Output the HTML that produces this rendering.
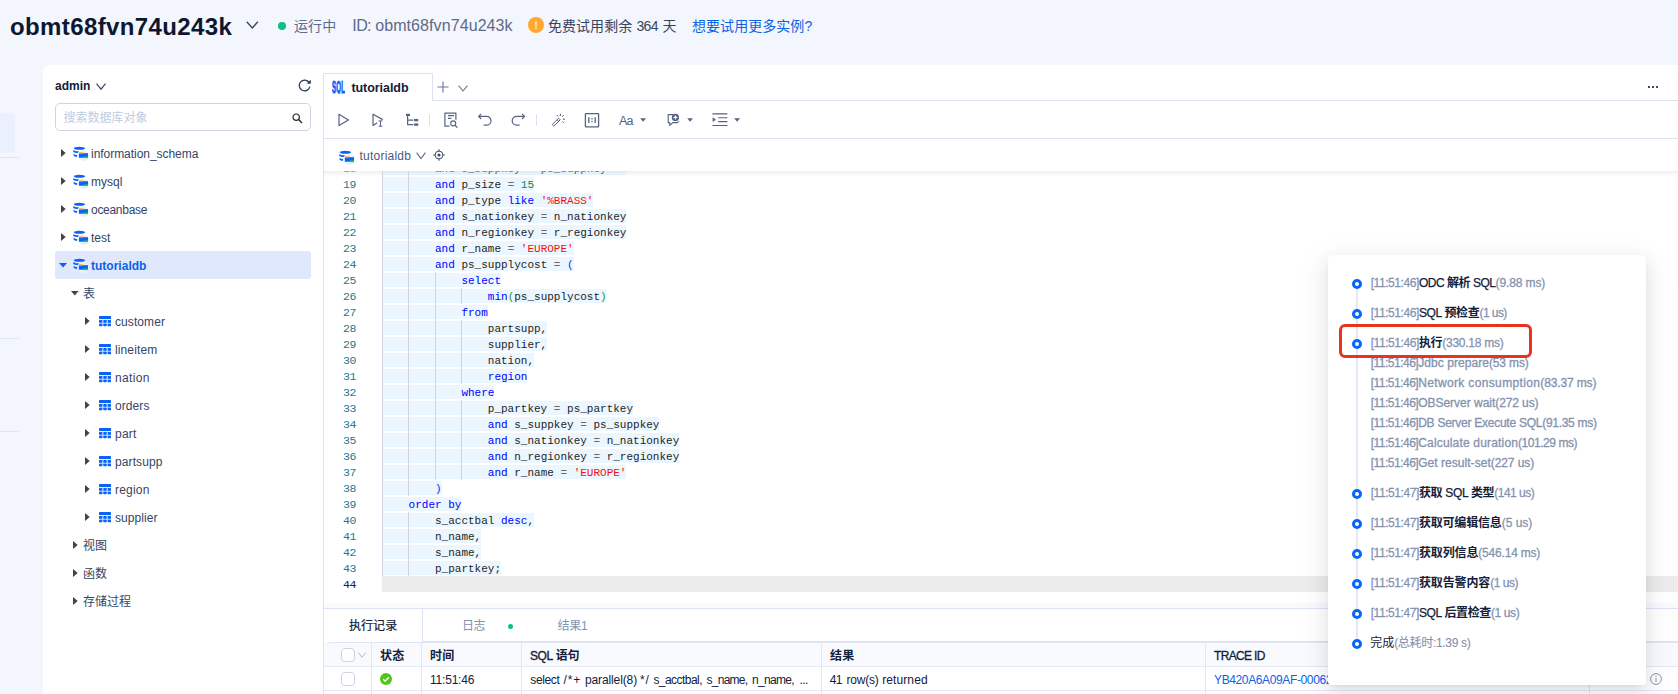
<!DOCTYPE html>
<html lang="zh-CN">
<head>
<meta charset="utf-8">
<title>obmt68fvn74u243k</title>
<style>
*{box-sizing:border-box;margin:0;padding:0}
html,body{width:1678px;height:694px;overflow:hidden}
body{background:#f3f6fc;font-family:"Liberation Sans","Noto Sans CJK SC",sans-serif;font-size:12px;color:#132039;position:relative}
.abs{position:absolute;white-space:nowrap}
svg{display:block;overflow:visible}
i{font-style:normal}
.title{font-size:24px;font-weight:700;line-height:32px;color:#0d1830}
.hd{font-size:14px;line-height:20px;color:#5c6b8a}
.railact{background:#eaf0fd;border-radius:0 5px 5px 0}
.panel{background:#fff;border-radius:8px 0 0 0}
.admin{font-weight:700;font-size:12px;line-height:18px;color:#132039}
.search{border:1px solid #cdd5e4;border-radius:5px;background:#fff}
.search span{position:absolute;left:7.4px;top:5.4px;line-height:18px;color:#c1cbe0;font-size:12px}
.tt{font-size:12px;line-height:18px;color:#364563}
.tab{border:1px solid #dbe2f1;border-bottom:none;background:#fff}
.sqlg{font-size:16.5px;font-weight:700;color:#0a66fb;line-height:20px;height:17.2px;overflow:hidden;transform:scaleX(.37);transform-origin:0 50%;letter-spacing:0.6px;-webkit-text-stroke:1px #0a66fb}
.tabt{font-size:12.5px;font-weight:700;line-height:18px;color:#132039}
.dbrow{background:#fff}
.edsh{position:absolute;left:0;top:0;width:100%;height:6px;box-shadow:#dcdcdc 0 6px 6px -6px inset}
#ed{left:324px;top:171px;width:1354px;height:421px;overflow:hidden;background:#fff}
.ln{position:absolute;left:0;width:32.2px;text-align:right;font-family:"Liberation Mono",monospace;font-size:11.5px;letter-spacing:-.3px;line-height:16px;height:16px;color:#237893;padding-top:1px}
.ln.cur{color:#0b216f}
.curline{position:absolute;left:58px;width:1300px;height:16px;background:#ececec}
.cl{position:absolute;left:58.2px;height:16px;font-family:"Liberation Mono",monospace;font-size:11px;line-height:16px;white-space:pre;color:#1e1e1e}
.cl .s{position:absolute;left:0;top:1px;height:14px;background:#ebf6fe}
.cl .x{position:relative;top:1px}
.k{color:#0000ff}.st{color:#f80c0c}.n{color:#098658}.o{color:#6b6b6b}.p{color:#0431fa}.q{color:#319331}
.g{position:absolute;top:0;width:1px;height:16px;background:#cdd4de;margin-left:-.2px}
.btab{font-size:12px;line-height:18px;color:#8592ad}
.th{background:#f9fafe;border-top:1px solid #dfe5f2;border-bottom:1px solid #e4e9f4;border-radius:6px 0 0 0}
.tht{line-height:18px;font-weight:700;font-size:12px;color:#132039}
.tdt{line-height:18px;font-size:12px;color:#132039}
.cb{border:1px solid #cdd5e4;border-radius:4px;background:#fff}
.pop{background:#fff;border-radius:5px 5px 2px 4px;box-shadow:0 3px 6px -4px rgba(10,25,70,.12),0 6px 16px 0 rgba(10,25,70,.08),0 9px 28px 8px rgba(10,25,70,.05)}
.dot{border:3px solid #0765fa;border-radius:50%;background:#fff}
.sg{display:inline-block;white-space:nowrap;vertical-align:top}
.it{font-size:12px;line-height:18px;color:#8592ad;-webkit-text-stroke:.26px}
.it .cj{font-weight:700;-webkit-text-stroke:0}
.sub{font-size:12px;line-height:18px;color:#8592ad;font-weight:400;-webkit-text-stroke:.3px}
.red{border:3px solid #e6341e;border-radius:6px}

</style>
</head>
<body>
<div id="t1" class="abs title" style="left:10px;top:11px;letter-spacing:0.380px;">obmt68fvn74u243k</div>
<svg class="abs" style="left:246px;top:21px" width="13" height="9" viewBox="0 0 13 9"><path d="M0.8 0.8 L6.3 7 L11.8 0.8" fill="none" stroke="#3b4863" stroke-width="1.4"/></svg>
<div class="abs " style="left:278px;top:22px;width:8px;height:8px;background:#0ac185;border-radius:50%"></div>
<div id="t2" class="abs hd" style="left:294px;top:16px;letter-spacing:0.100px;">运行中</div>
<div id="t3" class="abs hd" style="left:352.3px;top:16px;letter-spacing:-0.600px;font-size:16px">ID:</div>
<div id="t4" class="abs hd" style="left:375.2px;top:16px;letter-spacing:0.086px;font-size:16px">obmt68fvn74u243k</div>
<svg class="abs" style="left:528px;top:16.8px" width="16" height="16" viewBox="0 0 16 16"><circle cx="8" cy="8" r="8" fill="#ffa82d"/><rect x="7.1" y="4.2" width="1.8" height="5.6" rx=".4" fill="#fde3b6"/><rect x="7.1" y="10.6" width="1.8" height="1.6" rx=".4" fill="#fde3b6"/></svg>
<div id="t5" class="abs hd" style="left:548px;top:16px;letter-spacing:0.040px;color:#364563">免费试用剩余</div>
<div id="t6" class="abs hd" style="left:636.4px;top:16px;letter-spacing:-0.600px;color:#364563">364</div>
<div id="t7" class="abs hd" style="left:662.4px;top:16px;color:#364563">天</div>
<div id="t8" class="abs hd" style="left:692px;top:16px;letter-spacing:0.050px;color:#0b63e8">想要试用更多实例?</div>
<div class="abs railact" style="left:0px;top:113px;width:15px;height:40px;"></div>
<div class="abs " style="left:0px;top:157px;width:19px;height:1px;background:#dfe5f1"></div>
<div class="abs " style="left:0px;top:338px;width:19px;height:1px;background:#dfe5f1"></div>
<div class="abs " style="left:0px;top:431px;width:19px;height:1px;background:#dfe5f1"></div>
<div class="abs panel" style="left:43px;top:65px;width:1640px;height:640px;"></div>
<div class="abs " style="left:323px;top:73px;width:1px;height:630px;background:#dbe2f1"></div>
<div id="t9" class="abs admin" style="left:55px;top:77px;letter-spacing:0.014px;">admin</div>
<svg class="abs" style="left:96px;top:83px" width="10" height="7" viewBox="0 0 10 7"><path d="M0.5 0.6 L5 6.2 L9.5 0.6" fill="none" stroke="#3b4863" stroke-width="1.2"/></svg>
<svg class="abs" style="left:298px;top:79px" width="13" height="13" viewBox="0 0 13 13"><path d="M11.2 3.6 A5.4 5.4 0 1 0 11.9 7.6" fill="none" stroke="#2a3754" stroke-width="1.25"/><path d="M12.4 1.4 V4.3 H9.5 Z" fill="#2a3754" stroke="#2a3754" stroke-width=".8"/></svg>
<div class="abs search" style="left:55px;top:103px;width:256px;height:28px;"><span>搜索数据库对象</span></div>
<svg class="abs" style="left:291.8px;top:113px" width="11" height="11" viewBox="0 0 11 11"><circle cx="4.2" cy="4.2" r="3.2" fill="none" stroke="#22262e" stroke-width="1.2"/><path d="M6.6 6.6 L10 10" stroke="#22262e" stroke-width="1.4"/></svg>
<svg class="abs" style="left:60.8px;top:149.05px" width="5" height="8" viewBox="0 0 5 8"><path d="M0 0 L4.7 3.95 L0 7.9 Z" fill="#404349"/></svg>
<svg class="abs" style="left:73px;top:146px" width="16" height="16" viewBox="0 0 16 16"><circle cx="10.6" cy="9.8" r="5.3" fill="#e9effd"/><ellipse cx="6.4" cy="2.3" rx="5.7" ry="1.55" fill="#0a62f7"/><path d="M0.3 4.1 C1.6 5.2 4.2 5.5 6 5.2 L4.8 7 C3 7 1.4 6.6 0.3 6 Z" fill="#0a62f7"/><path d="M0.6 7.8 C1.4 8.6 2.8 9 4.2 9 L4 11 C2.6 11 1.4 10.5 0.6 9.8 Z" fill="#0a62f7"/><rect x="5.9" y="7.2" width="9.1" height="4.5" fill="#0a62f7"/><rect x="5.9" y="6.4" width="4.2" height="1.4" fill="#ff9a14"/><rect x="10.9" y="10.4" width="4.1" height="1.7" fill="#1fc45a"/></svg>
<div id="t10" class="abs tt" style="left:91px;top:145px;letter-spacing:-0.039px;">information_schema</div>
<svg class="abs" style="left:60.8px;top:177.05px" width="5" height="8" viewBox="0 0 5 8"><path d="M0 0 L4.7 3.95 L0 7.9 Z" fill="#404349"/></svg>
<svg class="abs" style="left:73px;top:174px" width="16" height="16" viewBox="0 0 16 16"><circle cx="10.6" cy="9.8" r="5.3" fill="#e9effd"/><ellipse cx="6.4" cy="2.3" rx="5.7" ry="1.55" fill="#0a62f7"/><path d="M0.3 4.1 C1.6 5.2 4.2 5.5 6 5.2 L4.8 7 C3 7 1.4 6.6 0.3 6 Z" fill="#0a62f7"/><path d="M0.6 7.8 C1.4 8.6 2.8 9 4.2 9 L4 11 C2.6 11 1.4 10.5 0.6 9.8 Z" fill="#0a62f7"/><rect x="5.9" y="7.2" width="9.1" height="4.5" fill="#0a62f7"/><rect x="5.9" y="6.4" width="4.2" height="1.4" fill="#ff9a14"/><rect x="10.9" y="10.4" width="4.1" height="1.7" fill="#1fc45a"/></svg>
<div id="t11" class="abs tt" style="left:91px;top:173px;letter-spacing:0.014px;">mysql</div>
<svg class="abs" style="left:60.8px;top:205.05px" width="5" height="8" viewBox="0 0 5 8"><path d="M0 0 L4.7 3.95 L0 7.9 Z" fill="#404349"/></svg>
<svg class="abs" style="left:73px;top:202px" width="16" height="16" viewBox="0 0 16 16"><circle cx="10.6" cy="9.8" r="5.3" fill="#e9effd"/><ellipse cx="6.4" cy="2.3" rx="5.7" ry="1.55" fill="#0a62f7"/><path d="M0.3 4.1 C1.6 5.2 4.2 5.5 6 5.2 L4.8 7 C3 7 1.4 6.6 0.3 6 Z" fill="#0a62f7"/><path d="M0.6 7.8 C1.4 8.6 2.8 9 4.2 9 L4 11 C2.6 11 1.4 10.5 0.6 9.8 Z" fill="#0a62f7"/><rect x="5.9" y="7.2" width="9.1" height="4.5" fill="#0a62f7"/><rect x="5.9" y="6.4" width="4.2" height="1.4" fill="#ff9a14"/><rect x="10.9" y="10.4" width="4.1" height="1.7" fill="#1fc45a"/></svg>
<div id="t12" class="abs tt" style="left:91px;top:201px;letter-spacing:-0.290px;">oceanbase</div>
<svg class="abs" style="left:60.8px;top:233.05px" width="5" height="8" viewBox="0 0 5 8"><path d="M0 0 L4.7 3.95 L0 7.9 Z" fill="#404349"/></svg>
<svg class="abs" style="left:73px;top:230px" width="16" height="16" viewBox="0 0 16 16"><circle cx="10.6" cy="9.8" r="5.3" fill="#e9effd"/><ellipse cx="6.4" cy="2.3" rx="5.7" ry="1.55" fill="#0a62f7"/><path d="M0.3 4.1 C1.6 5.2 4.2 5.5 6 5.2 L4.8 7 C3 7 1.4 6.6 0.3 6 Z" fill="#0a62f7"/><path d="M0.6 7.8 C1.4 8.6 2.8 9 4.2 9 L4 11 C2.6 11 1.4 10.5 0.6 9.8 Z" fill="#0a62f7"/><rect x="5.9" y="7.2" width="9.1" height="4.5" fill="#0a62f7"/><rect x="5.9" y="6.4" width="4.2" height="1.4" fill="#ff9a14"/><rect x="10.9" y="10.4" width="4.1" height="1.7" fill="#1fc45a"/></svg>
<div id="t13" class="abs tt" style="left:91px;top:229px;letter-spacing:0.019px;">test</div>
<div class="abs " style="left:55px;top:251px;width:256px;height:28px;background:#dfe8fd;border-radius:3px"></div>
<svg class="abs" style="left:58.9px;top:262.59999999999997px" width="9" height="5" viewBox="0 0 9 5"><path d="M0 0 H8.1 L4.05 4.6 Z" fill="#0b63e8"/></svg>
<svg class="abs" style="left:73px;top:258px" width="16" height="16" viewBox="0 0 16 16"><circle cx="10.6" cy="9.8" r="5.3" fill="#e9effd"/><ellipse cx="6.4" cy="2.3" rx="5.7" ry="1.55" fill="#0a62f7"/><path d="M0.3 4.1 C1.6 5.2 4.2 5.5 6 5.2 L4.8 7 C3 7 1.4 6.6 0.3 6 Z" fill="#0a62f7"/><path d="M0.6 7.8 C1.4 8.6 2.8 9 4.2 9 L4 11 C2.6 11 1.4 10.5 0.6 9.8 Z" fill="#0a62f7"/><rect x="5.9" y="7.2" width="9.1" height="4.5" fill="#0a62f7"/><rect x="5.9" y="6.4" width="4.2" height="1.4" fill="#ff9a14"/><rect x="10.9" y="10.4" width="4.1" height="1.7" fill="#1fc45a"/></svg>
<div id="t14" class="abs tt" style="left:91px;top:257px;letter-spacing:0.008px;color:#0b63e8;font-weight:700">tutorialdb</div>
<svg class="abs" style="left:71.2px;top:290.7px" width="9" height="5" viewBox="0 0 9 5"><path d="M0 0 H7.6 L3.8 4.6 Z" fill="#404349"/></svg>
<div id="t15" class="abs tt" style="left:83px;top:285px;">表</div>
<svg class="abs" style="left:84.8px;top:317.05px" width="5" height="8" viewBox="0 0 5 8"><path d="M0 0 L4.7 3.95 L0 7.9 Z" fill="#404349"/></svg>
<svg class="abs" style="left:99px;top:316px" width="12" height="11" viewBox="0 0 12 11"><rect x="0.4" y="3.6" width="11.2" height="6.4" fill="#c3d6fc"/><rect x="0" y="0" width="12" height="2.9" rx="0.5" fill="#0a62f7"/><g fill="#0a62f7"><rect x="0" y="4" width="3.2" height="2.8" rx=".5"/><rect x="4.4" y="4" width="3.2" height="2.8" rx=".5"/><rect x="8.8" y="4" width="3.2" height="2.8" rx=".5"/><rect x="0" y="7.7" width="3.2" height="2.5" rx=".5"/><rect x="4.4" y="7.7" width="3.2" height="2.5" rx=".5"/><rect x="8.8" y="7.7" width="3.2" height="2.5" rx=".5"/></g></svg>
<div id="t16" class="abs tt" style="left:115px;top:313px;letter-spacing:0.077px;">customer</div>
<svg class="abs" style="left:84.8px;top:345.05px" width="5" height="8" viewBox="0 0 5 8"><path d="M0 0 L4.7 3.95 L0 7.9 Z" fill="#404349"/></svg>
<svg class="abs" style="left:99px;top:344px" width="12" height="11" viewBox="0 0 12 11"><rect x="0.4" y="3.6" width="11.2" height="6.4" fill="#c3d6fc"/><rect x="0" y="0" width="12" height="2.9" rx="0.5" fill="#0a62f7"/><g fill="#0a62f7"><rect x="0" y="4" width="3.2" height="2.8" rx=".5"/><rect x="4.4" y="4" width="3.2" height="2.8" rx=".5"/><rect x="8.8" y="4" width="3.2" height="2.8" rx=".5"/><rect x="0" y="7.7" width="3.2" height="2.5" rx=".5"/><rect x="4.4" y="7.7" width="3.2" height="2.5" rx=".5"/><rect x="8.8" y="7.7" width="3.2" height="2.5" rx=".5"/></g></svg>
<div id="t17" class="abs tt" style="left:115px;top:341px;letter-spacing:0.120px;">lineitem</div>
<svg class="abs" style="left:84.8px;top:373.05px" width="5" height="8" viewBox="0 0 5 8"><path d="M0 0 L4.7 3.95 L0 7.9 Z" fill="#404349"/></svg>
<svg class="abs" style="left:99px;top:372px" width="12" height="11" viewBox="0 0 12 11"><rect x="0.4" y="3.6" width="11.2" height="6.4" fill="#c3d6fc"/><rect x="0" y="0" width="12" height="2.9" rx="0.5" fill="#0a62f7"/><g fill="#0a62f7"><rect x="0" y="4" width="3.2" height="2.8" rx=".5"/><rect x="4.4" y="4" width="3.2" height="2.8" rx=".5"/><rect x="8.8" y="4" width="3.2" height="2.8" rx=".5"/><rect x="0" y="7.7" width="3.2" height="2.5" rx=".5"/><rect x="4.4" y="7.7" width="3.2" height="2.5" rx=".5"/><rect x="8.8" y="7.7" width="3.2" height="2.5" rx=".5"/></g></svg>
<div id="t18" class="abs tt" style="left:115px;top:369px;letter-spacing:0.339px;">nation</div>
<svg class="abs" style="left:84.8px;top:401.05px" width="5" height="8" viewBox="0 0 5 8"><path d="M0 0 L4.7 3.95 L0 7.9 Z" fill="#404349"/></svg>
<svg class="abs" style="left:99px;top:400px" width="12" height="11" viewBox="0 0 12 11"><rect x="0.4" y="3.6" width="11.2" height="6.4" fill="#c3d6fc"/><rect x="0" y="0" width="12" height="2.9" rx="0.5" fill="#0a62f7"/><g fill="#0a62f7"><rect x="0" y="4" width="3.2" height="2.8" rx=".5"/><rect x="4.4" y="4" width="3.2" height="2.8" rx=".5"/><rect x="8.8" y="4" width="3.2" height="2.8" rx=".5"/><rect x="0" y="7.7" width="3.2" height="2.5" rx=".5"/><rect x="4.4" y="7.7" width="3.2" height="2.5" rx=".5"/><rect x="8.8" y="7.7" width="3.2" height="2.5" rx=".5"/></g></svg>
<div id="t19" class="abs tt" style="left:115px;top:397px;letter-spacing:0.077px;">orders</div>
<svg class="abs" style="left:84.8px;top:429.05px" width="5" height="8" viewBox="0 0 5 8"><path d="M0 0 L4.7 3.95 L0 7.9 Z" fill="#404349"/></svg>
<svg class="abs" style="left:99px;top:428px" width="12" height="11" viewBox="0 0 12 11"><rect x="0.4" y="3.6" width="11.2" height="6.4" fill="#c3d6fc"/><rect x="0" y="0" width="12" height="2.9" rx="0.5" fill="#0a62f7"/><g fill="#0a62f7"><rect x="0" y="4" width="3.2" height="2.8" rx=".5"/><rect x="4.4" y="4" width="3.2" height="2.8" rx=".5"/><rect x="8.8" y="4" width="3.2" height="2.8" rx=".5"/><rect x="0" y="7.7" width="3.2" height="2.5" rx=".5"/><rect x="4.4" y="7.7" width="3.2" height="2.5" rx=".5"/><rect x="8.8" y="7.7" width="3.2" height="2.5" rx=".5"/></g></svg>
<div id="t20" class="abs tt" style="left:115px;top:425px;letter-spacing:0.237px;">part</div>
<svg class="abs" style="left:84.8px;top:457.05px" width="5" height="8" viewBox="0 0 5 8"><path d="M0 0 L4.7 3.95 L0 7.9 Z" fill="#404349"/></svg>
<svg class="abs" style="left:99px;top:456px" width="12" height="11" viewBox="0 0 12 11"><rect x="0.4" y="3.6" width="11.2" height="6.4" fill="#c3d6fc"/><rect x="0" y="0" width="12" height="2.9" rx="0.5" fill="#0a62f7"/><g fill="#0a62f7"><rect x="0" y="4" width="3.2" height="2.8" rx=".5"/><rect x="4.4" y="4" width="3.2" height="2.8" rx=".5"/><rect x="8.8" y="4" width="3.2" height="2.8" rx=".5"/><rect x="0" y="7.7" width="3.2" height="2.5" rx=".5"/><rect x="4.4" y="7.7" width="3.2" height="2.5" rx=".5"/><rect x="8.8" y="7.7" width="3.2" height="2.5" rx=".5"/></g></svg>
<div id="t21" class="abs tt" style="left:115px;top:453px;letter-spacing:0.100px;">partsupp</div>
<svg class="abs" style="left:84.8px;top:485.05px" width="5" height="8" viewBox="0 0 5 8"><path d="M0 0 L4.7 3.95 L0 7.9 Z" fill="#404349"/></svg>
<svg class="abs" style="left:99px;top:484px" width="12" height="11" viewBox="0 0 12 11"><rect x="0.4" y="3.6" width="11.2" height="6.4" fill="#c3d6fc"/><rect x="0" y="0" width="12" height="2.9" rx="0.5" fill="#0a62f7"/><g fill="#0a62f7"><rect x="0" y="4" width="3.2" height="2.8" rx=".5"/><rect x="4.4" y="4" width="3.2" height="2.8" rx=".5"/><rect x="8.8" y="4" width="3.2" height="2.8" rx=".5"/><rect x="0" y="7.7" width="3.2" height="2.5" rx=".5"/><rect x="4.4" y="7.7" width="3.2" height="2.5" rx=".5"/><rect x="8.8" y="7.7" width="3.2" height="2.5" rx=".5"/></g></svg>
<div id="t22" class="abs tt" style="left:115px;top:481px;letter-spacing:0.208px;">region</div>
<svg class="abs" style="left:84.8px;top:513.05px" width="5" height="8" viewBox="0 0 5 8"><path d="M0 0 L4.7 3.95 L0 7.9 Z" fill="#404349"/></svg>
<svg class="abs" style="left:99px;top:512px" width="12" height="11" viewBox="0 0 12 11"><rect x="0.4" y="3.6" width="11.2" height="6.4" fill="#c3d6fc"/><rect x="0" y="0" width="12" height="2.9" rx="0.5" fill="#0a62f7"/><g fill="#0a62f7"><rect x="0" y="4" width="3.2" height="2.8" rx=".5"/><rect x="4.4" y="4" width="3.2" height="2.8" rx=".5"/><rect x="8.8" y="4" width="3.2" height="2.8" rx=".5"/><rect x="0" y="7.7" width="3.2" height="2.5" rx=".5"/><rect x="4.4" y="7.7" width="3.2" height="2.5" rx=".5"/><rect x="8.8" y="7.7" width="3.2" height="2.5" rx=".5"/></g></svg>
<div id="t23" class="abs tt" style="left:115px;top:509px;letter-spacing:0.053px;">supplier</div>
<svg class="abs" style="left:72.8px;top:541.05px" width="5" height="8" viewBox="0 0 5 8"><path d="M0 0 L4.7 3.95 L0 7.9 Z" fill="#404349"/></svg>
<div id="t24" class="abs tt" style="left:83px;top:537px;">视图</div>
<svg class="abs" style="left:72.8px;top:569.05px" width="5" height="8" viewBox="0 0 5 8"><path d="M0 0 L4.7 3.95 L0 7.9 Z" fill="#404349"/></svg>
<div id="t25" class="abs tt" style="left:83px;top:565px;">函数</div>
<svg class="abs" style="left:72.8px;top:597.05px" width="5" height="8" viewBox="0 0 5 8"><path d="M0 0 L4.7 3.95 L0 7.9 Z" fill="#404349"/></svg>
<div id="t26" class="abs tt" style="left:83px;top:593px;">存储过程</div>
<div class="abs tab" style="left:323px;top:73px;width:110px;height:28px;"></div>
<div class="abs " style="left:432px;top:100px;width:1250px;height:1px;background:#dbe2f1"></div>
<div id="t27" class="abs sqlg" style="left:331.7px;top:76.8px;">SQL</div>
<div id="t28" class="abs tabt" style="left:351.4px;top:79px;letter-spacing:-0.049px;">tutorialdb</div>
<svg class="abs" style="left:437px;top:81px" width="12" height="12" viewBox="0 0 12 12"><path d="M6 0.5 V11.5 M0.5 6 H11.5" stroke="#6a7690" stroke-width="1.1" fill="none"/></svg>
<svg class="abs" style="left:458px;top:85px" width="10" height="7" viewBox="0 0 10 7"><path d="M0.6 0.6 L5 6 L9.4 0.6" fill="none" stroke="#6a7690" stroke-width="1.1"/></svg>
<div class="abs " style="left:1648.4px;top:86px;width:1.7px;height:2px;background:#3f4c69"></div><div class="abs " style="left:1652.2px;top:86px;width:1.7px;height:2px;background:#3f4c69"></div><div class="abs " style="left:1656px;top:86px;width:1.7px;height:2px;background:#3f4c69"></div>
<div class="abs " style="left:324px;top:138px;width:1360px;height:1px;background:#dbe2f1"></div>
<svg class="abs" style="left:324px;top:101px" width="440" height="37" viewBox="324 101 440 37" fill="none" stroke="#56637f" stroke-width="1.2" stroke-linejoin="round">
<path d="M339 114.2 V125.6 L348.4 119.9 Z"/>
<path d="M382.8 119.6 L373 114.2 V125.4 L377.2 122.8"/>
<path d="M378.6 120.9 H382.4 M378.6 126.2 H382.4 M380.5 120.9 V126.2" stroke-width="1"/>
<g stroke="none" fill="#56637f"><rect x="406" y="113.8" width="4" height="2.2"/><rect x="414.2" y="118.9" width="4" height="2.4"/><rect x="414.2" y="123.4" width="4" height="2.4"/></g>
<path d="M407.6 116 V124.6 H413.4 M407.6 120.1 H413.4"/>
<path d="M429.5 114 V126" stroke="#d9dfec" stroke-width="1"/>
<path d="M449.4 126.2 H444.9 V113.2 H455.9 V119.8"/>
<path d="M448 115.6 H454 M448 118.4 H451.4" stroke-width="1.1"/>
<circle cx="453.2" cy="123.4" r="2.5" stroke-width="1.1"/>
<path d="M455.1 125.3 L457.4 127.6" stroke-width="1.3"/>
<path d="M481.2 113.8 L478.6 116.4 L481.2 119 M478.8 116.4 H486.6 A4.4 4.4 0 0 1 486.6 125.2 H483.6"/>
<path d="M522 113.8 L524.6 116.4 L522 119 M524.4 116.4 H516.6 A4.4 4.4 0 0 0 516.6 125.2 H519.6"/>
<path d="M536.5 114 V126" stroke="#d9dfec" stroke-width="1"/>
<path d="M552.2 124.6 L558.6 118.2 L560.2 119.8 L553.8 126.2 Z M557 119.8 L558.6 121.4" stroke-width="1"/>
<path d="M560.4 113.8 V116 M563.8 115 L562.4 116.6 M562.8 119.2 H565 M562.4 121.4 L563.8 122.8 M556.8 115 L558 116.4" stroke-width="1"/>
<rect x="585.4" y="113.6" width="13.2" height="13.2" rx="0.6" stroke-width="1.3"/>
<path d="M588.8 117.2 V123 M595.2 117.2 V123" stroke-width="1.3"/>
<path d="M592 118 V119.4 M592 120.8 V122.2" stroke-width="1.2"/>
<g stroke="none" fill="#56637f"><path d="M640.2 118.2 H646 L643.1 121.7 Z"/><path d="M687.2 118.2 H693 L690.1 121.7 Z"/><path d="M734.2 118.2 H740 L737.1 121.7 Z"/>
<path d="M712.6 117.3 L716 119.7 L712.6 122.1 Z"/></g>
<path d="M673 114.6 H668.2 V122.6 H669.8 V125.4 L672.8 122.6 H677.4 L679 121.4" stroke-width="1.1"/>
<circle cx="675.4" cy="117.4" r="3.6" fill="#56637f" stroke="none"/>
<path d="M675.4 115.4 V119.4 M673.4 117.4 H677.4" stroke="#fff" stroke-width="1.1"/>
<path d="M712.4 113.9 H727.4 M718.2 117.8 H727.4 M718.2 121.6 H727.4 M712.4 125.5 H727.4" stroke-width="1.1"/>
</svg>
<div class="abs" style="left:619px;top:111.5px;font-size:12.5px;line-height:18px;color:#56637f;letter-spacing:-0.8px">Aa</div>

<div class="abs dbrow" style="left:324px;top:139px;width:1360px;height:32px;"></div>
<svg class="abs" style="left:339px;top:150px" width="16" height="16" viewBox="0 0 16 16"><circle cx="10.6" cy="9.8" r="5.3" fill="#e9effd"/><ellipse cx="6.4" cy="2.3" rx="5.7" ry="1.55" fill="#0a62f7"/><path d="M0.3 4.1 C1.6 5.2 4.2 5.5 6 5.2 L4.8 7 C3 7 1.4 6.6 0.3 6 Z" fill="#0a62f7"/><path d="M0.6 7.8 C1.4 8.6 2.8 9 4.2 9 L4 11 C2.6 11 1.4 10.5 0.6 9.8 Z" fill="#0a62f7"/><rect x="5.9" y="7.2" width="9.1" height="4.5" fill="#0a62f7"/><rect x="5.9" y="6.4" width="4.2" height="1.4" fill="#ff9a14"/><rect x="10.9" y="10.4" width="4.1" height="1.7" fill="#1fc45a"/></svg>
<div id="t29" class="abs tt" style="left:359.5px;top:147px;letter-spacing:0.225px;color:#4b5a7c">tutorialdb</div>
<svg class="abs" style="left:416px;top:152px" width="10" height="8" viewBox="0 0 10 8"><path d="M0.6 0.6 L5 6.6 L9.4 0.6" fill="none" stroke="#5c6b8a" stroke-width="1.1"/></svg>
<svg class="abs" style="left:433px;top:149px" width="12" height="12" viewBox="0 0 12 12"><circle cx="6" cy="6" r="3.9" fill="none" stroke="#3b4863" stroke-width="1"/><circle cx="6" cy="6" r="1.6" fill="#3b4863"/><path d="M6 0.2 V2.2 M6 9.8 V11.8 M0.2 6 H2.2 M9.8 6 H11.8" stroke="#3b4863" stroke-width="1"/></svg>
<div class="abs" id="ed"><div class="ln" style="top:-11px">18</div><div class="cl" style="top:-11px"><i class="s" style="width:244.2px"></i><i class="g" style="left:0.0px"></i><i class="g" style="left:26.4px"></i><span class="x">        <span class="k">and</span> s_suppkey <span class="o">=</span> ps_suppkey</span></div><div class="ln" style="top:5px">19</div><div class="cl" style="top:5px"><i class="s" style="width:151.8px"></i><i class="g" style="left:0.0px"></i><i class="g" style="left:26.4px"></i><span class="x">        <span class="k">and</span> p_size <span class="o">=</span> <span class="n">15</span></span></div><div class="ln" style="top:21px">20</div><div class="cl" style="top:21px"><i class="s" style="width:211.2px"></i><i class="g" style="left:0.0px"></i><i class="g" style="left:26.4px"></i><span class="x">        <span class="k">and</span> p_type <span class="k">like</span> <span class="st">&#x27;%BRASS&#x27;</span></span></div><div class="ln" style="top:37px">21</div><div class="cl" style="top:37px"><i class="s" style="width:244.2px"></i><i class="g" style="left:0.0px"></i><i class="g" style="left:26.4px"></i><span class="x">        <span class="k">and</span> s_nationkey <span class="o">=</span> n_nationkey</span></div><div class="ln" style="top:53px">22</div><div class="cl" style="top:53px"><i class="s" style="width:244.2px"></i><i class="g" style="left:0.0px"></i><i class="g" style="left:26.4px"></i><span class="x">        <span class="k">and</span> n_regionkey <span class="o">=</span> r_regionkey</span></div><div class="ln" style="top:69px">23</div><div class="cl" style="top:69px"><i class="s" style="width:191.4px"></i><i class="g" style="left:0.0px"></i><i class="g" style="left:26.4px"></i><span class="x">        <span class="k">and</span> r_name <span class="o">=</span> <span class="st">&#x27;EUROPE&#x27;</span></span></div><div class="ln" style="top:85px">24</div><div class="cl" style="top:85px"><i class="s" style="width:191.4px"></i><i class="g" style="left:0.0px"></i><i class="g" style="left:26.4px"></i><span class="x">        <span class="k">and</span> ps_supplycost <span class="o">=</span> <span class="p">(</span></span></div><div class="ln" style="top:101px">25</div><div class="cl" style="top:101px"><i class="s" style="width:118.8px"></i><i class="g" style="left:0.0px"></i><i class="g" style="left:26.4px"></i><i class="g" style="left:52.8px"></i><span class="x">            <span class="k">select</span></span></div><div class="ln" style="top:117px">26</div><div class="cl" style="top:117px"><i class="s" style="width:224.4px"></i><i class="g" style="left:0.0px"></i><i class="g" style="left:26.4px"></i><i class="g" style="left:52.8px"></i><i class="g" style="left:79.2px"></i><span class="x">                <span class="k">min</span><span class="q">(</span>ps_supplycost<span class="q">)</span></span></div><div class="ln" style="top:133px">27</div><div class="cl" style="top:133px"><i class="s" style="width:105.6px"></i><i class="g" style="left:0.0px"></i><i class="g" style="left:26.4px"></i><i class="g" style="left:52.8px"></i><span class="x">            <span class="k">from</span></span></div><div class="ln" style="top:149px">28</div><div class="cl" style="top:149px"><i class="s" style="width:165.0px"></i><i class="g" style="left:0.0px"></i><i class="g" style="left:26.4px"></i><i class="g" style="left:52.8px"></i><i class="g" style="left:79.2px"></i><span class="x">                partsupp,</span></div><div class="ln" style="top:165px">29</div><div class="cl" style="top:165px"><i class="s" style="width:165.0px"></i><i class="g" style="left:0.0px"></i><i class="g" style="left:26.4px"></i><i class="g" style="left:52.8px"></i><i class="g" style="left:79.2px"></i><span class="x">                supplier,</span></div><div class="ln" style="top:181px">30</div><div class="cl" style="top:181px"><i class="s" style="width:151.8px"></i><i class="g" style="left:0.0px"></i><i class="g" style="left:26.4px"></i><i class="g" style="left:52.8px"></i><i class="g" style="left:79.2px"></i><span class="x">                nation,</span></div><div class="ln" style="top:197px">31</div><div class="cl" style="top:197px"><i class="s" style="width:145.2px"></i><i class="g" style="left:0.0px"></i><i class="g" style="left:26.4px"></i><i class="g" style="left:52.8px"></i><i class="g" style="left:79.2px"></i><span class="x">                <span class="k">region</span></span></div><div class="ln" style="top:213px">32</div><div class="cl" style="top:213px"><i class="s" style="width:112.2px"></i><i class="g" style="left:0.0px"></i><i class="g" style="left:26.4px"></i><i class="g" style="left:52.8px"></i><span class="x">            <span class="k">where</span></span></div><div class="ln" style="top:229px">33</div><div class="cl" style="top:229px"><i class="s" style="width:250.8px"></i><i class="g" style="left:0.0px"></i><i class="g" style="left:26.4px"></i><i class="g" style="left:52.8px"></i><i class="g" style="left:79.2px"></i><span class="x">                p_partkey <span class="o">=</span> ps_partkey</span></div><div class="ln" style="top:245px">34</div><div class="cl" style="top:245px"><i class="s" style="width:277.2px"></i><i class="g" style="left:0.0px"></i><i class="g" style="left:26.4px"></i><i class="g" style="left:52.8px"></i><i class="g" style="left:79.2px"></i><span class="x">                <span class="k">and</span> s_suppkey <span class="o">=</span> ps_suppkey</span></div><div class="ln" style="top:261px">35</div><div class="cl" style="top:261px"><i class="s" style="width:297.0px"></i><i class="g" style="left:0.0px"></i><i class="g" style="left:26.4px"></i><i class="g" style="left:52.8px"></i><i class="g" style="left:79.2px"></i><span class="x">                <span class="k">and</span> s_nationkey <span class="o">=</span> n_nationkey</span></div><div class="ln" style="top:277px">36</div><div class="cl" style="top:277px"><i class="s" style="width:297.0px"></i><i class="g" style="left:0.0px"></i><i class="g" style="left:26.4px"></i><i class="g" style="left:52.8px"></i><i class="g" style="left:79.2px"></i><span class="x">                <span class="k">and</span> n_regionkey <span class="o">=</span> r_regionkey</span></div><div class="ln" style="top:293px">37</div><div class="cl" style="top:293px"><i class="s" style="width:244.2px"></i><i class="g" style="left:0.0px"></i><i class="g" style="left:26.4px"></i><i class="g" style="left:52.8px"></i><i class="g" style="left:79.2px"></i><span class="x">                <span class="k">and</span> r_name <span class="o">=</span> <span class="st">&#x27;EUROPE&#x27;</span></span></div><div class="ln" style="top:309px">38</div><div class="cl" style="top:309px"><i class="s" style="width:59.4px"></i><i class="g" style="left:0.0px"></i><i class="g" style="left:26.4px"></i><span class="x">        <span class="p">)</span></span></div><div class="ln" style="top:325px">39</div><div class="cl" style="top:325px"><i class="s" style="width:79.2px"></i><i class="g" style="left:0.0px"></i><span class="x">    <span class="k">order</span> <span class="k">by</span></span></div><div class="ln" style="top:341px">40</div><div class="cl" style="top:341px"><i class="s" style="width:151.8px"></i><i class="g" style="left:0.0px"></i><i class="g" style="left:26.4px"></i><span class="x">        s_acctbal <span class="k">desc</span>,</span></div><div class="ln" style="top:357px">41</div><div class="cl" style="top:357px"><i class="s" style="width:99.0px"></i><i class="g" style="left:0.0px"></i><i class="g" style="left:26.4px"></i><span class="x">        n_name,</span></div><div class="ln" style="top:373px">42</div><div class="cl" style="top:373px"><i class="s" style="width:99.0px"></i><i class="g" style="left:0.0px"></i><i class="g" style="left:26.4px"></i><span class="x">        s_name,</span></div><div class="ln" style="top:389px">43</div><div class="cl" style="top:389px"><i class="s" style="width:118.8px"></i><i class="g" style="left:0.0px"></i><i class="g" style="left:26.4px"></i><span class="x">        p_partkey;</span></div><div class="ln cur" style="top:405px">44</div><div class="curline" style="top:405px"></div><div class="edsh"></div></div>
<div class="abs " style="left:324px;top:603px;width:1360px;height:5px;background:#f8fafe"></div>
<div class="abs " style="left:324px;top:608px;width:1360px;height:1px;background:#dbe2f1"></div>
<div class="abs " style="left:422px;top:609px;width:1px;height:33px;background:#dbe2f1"></div>
<div class="abs " style="left:422px;top:641px;width:1262px;height:1px;background:#dbe2f1"></div>
<div id="t30" class="abs btab" style="left:349px;top:617.4px;letter-spacing:0.061px;color:#132039;-webkit-text-stroke:.2px">执行记录</div>
<div id="t31" class="abs btab" style="left:462px;top:617.2px;letter-spacing:-0.600px;">日志</div>
<div class="abs " style="left:508px;top:624px;width:5px;height:5px;background:#0ac185;border-radius:50%"></div>
<div id="t32" class="abs btab" style="left:557.6px;top:617.2px;letter-spacing:-0.244px;">结果1</div>
<div class="abs th" style="left:324px;top:642px;width:1360px;height:25px;"></div>
<div class="abs " style="left:324px;top:667px;width:1360px;height:24px;border-bottom:1px solid #e4e9f4;background:#fff"></div>
<div class="abs " style="left:371px;top:643px;width:1px;height:51px;background:#e1e6f2"></div>
<div class="abs " style="left:421px;top:643px;width:1px;height:51px;background:#e1e6f2"></div>
<div class="abs " style="left:521px;top:643px;width:1px;height:51px;background:#e1e6f2"></div>
<div class="abs " style="left:821px;top:643px;width:1px;height:51px;background:#e1e6f2"></div>
<div class="abs " style="left:1205px;top:643px;width:1px;height:51px;background:#e1e6f2"></div>
<div class="abs " style="left:1589px;top:643px;width:1px;height:51px;background:#e1e6f2"></div>
<div class="abs cb" style="left:341px;top:648px;width:14px;height:14px;"></div>
<svg class="abs" style="left:358.4px;top:652px" width="8" height="6" viewBox="0 0 8 6"><path d="M0.4 0.6 L4 5.4 L7.6 0.6" fill="none" stroke="#b3bdd2" stroke-width="1"/></svg>
<div id="t33" class="abs tht" style="left:380px;top:647.2px;letter-spacing:0.184px;">状态</div>
<div id="t34" class="abs tht" style="left:430px;top:647.2px;letter-spacing:0.184px;">时间</div>
<div id="t35" class="abs tht" style="left:530px;top:647.2px;letter-spacing:-0.392px;"><span style="font-weight:400;-webkit-text-stroke:.35px">SQL</span> 语句</div>
<div id="t36" class="abs tht" style="left:830px;top:647.2px;letter-spacing:0.184px;">结果</div>
<div id="t37" class="abs tht" style="left:1214px;top:647.2px;letter-spacing:-0.659px;font-weight:400;-webkit-text-stroke:.3px">TRACE ID</div>
<div class="abs cb" style="left:341px;top:672px;width:14px;height:14px;"></div>
<svg class="abs" style="left:380px;top:673px" width="12" height="12" viewBox="0 0 12 12"><circle cx="6" cy="6" r="6" fill="#52c41a"/><path d="M3.2 6.2 L5.2 8.2 L8.8 4.2" fill="none" stroke="#fff" stroke-width="1.4"/></svg>
<div id="t38" class="abs tdt" style="left:430px;top:670.7px;letter-spacing:-0.204px;">11:51:46</div>
<div id="t39" class="abs tdt" style="left:530.3px;top:670.7px;letter-spacing:-0.372px;">select</div>
<div id="t40" class="abs tdt" style="left:563.6px;top:670.7px;letter-spacing:0.800px;">/*+</div>
<div id="t41" class="abs tdt" style="left:584.9px;top:670.7px;letter-spacing:-0.106px;">parallel(8)</div>
<div id="t42" class="abs tdt" style="left:640.1px;top:670.7px;letter-spacing:0.800px;">*/</div>
<div id="t43" class="abs tdt" style="left:653.4px;top:670.7px;letter-spacing:-0.548px;">s_acctbal,</div>
<div id="t44" class="abs tdt" style="left:706.5px;top:670.7px;letter-spacing:-0.739px;">s_name,</div>
<div id="t45" class="abs tdt" style="left:752.0px;top:670.7px;letter-spacing:-0.684px;">n_name,</div>
<div id="t46" class="abs tdt" style="left:799.6px;top:670.7px;letter-spacing:-0.600px;">...</div>
<div id="t47" class="abs tdt" style="left:829.8px;top:670.7px;letter-spacing:-0.600px;">41</div>
<div id="t48" class="abs tdt" style="left:846.4px;top:670.7px;letter-spacing:-0.186px;">row(s)</div>
<div id="t49" class="abs tdt" style="left:882.2px;top:670.7px;letter-spacing:0.100px;">returned</div>
<div id="t50" class="abs tdt" style="left:1214px;top:670.7px;letter-spacing:-0.374px;color:#0b63e8">YB420A6A09AF-00062</div>
<svg class="abs" style="left:1650px;top:673px" width="12" height="12" viewBox="0 0 12 12"><circle cx="6" cy="6" r="5.4" fill="none" stroke="#8592ad" stroke-width="1"/><rect x="5.5" y="5" width="1" height="4" fill="#8592ad"/><rect x="5.5" y="2.8" width="1" height="1.2" fill="#8592ad"/></svg>
<div class="abs pop" style="left:1328px;top:255px;width:318px;height:430px;"></div>
<div class="abs " style="left:1356px;top:284px;width:2px;height:360px;background:#e2e8f6"></div>
<div class="abs dot" style="left:1352px;top:279px;width:10px;height:10px;"></div>
<div class="abs it" style="left:1370.7px;top:274px"><span id="t51" class="sg" style="width:48.20px;letter-spacing:-0.430px;">[11:51:46]</span><span id="t52" class="sg" style="width:76.70px;letter-spacing:-0.468px;color:#132039;-webkit-text-stroke:.25px">ODC <i class="cj">解析</i> SQL</span><span id="t53" class="sg" style="width:49.70px;letter-spacing:-0.110px;">(9.88 ms)</span></div>
<div class="abs dot" style="left:1352px;top:309px;width:10px;height:10px;"></div>
<div class="abs it" style="left:1370.7px;top:304px"><span id="t54" class="sg" style="width:48.20px;letter-spacing:-0.430px;">[11:51:46]</span><span id="t55" class="sg" style="width:60.60px;letter-spacing:-0.332px;color:#132039;-webkit-text-stroke:.25px">SQL <i class="cj">预检查</i></span><span id="t56" class="sg" style="width:27.30px;letter-spacing:-0.565px;">(1 us)</span></div>
<div class="abs dot" style="left:1352px;top:339px;width:10px;height:10px;"></div>
<div class="abs it" style="left:1370.7px;top:334px"><span id="t57" class="sg" style="width:48.20px;letter-spacing:-0.430px;">[11:51:46]</span><span id="t58" class="sg" style="width:23.40px;letter-spacing:-0.308px;color:#132039;-webkit-text-stroke:.25px"><i class="cj">执行</i></span><span id="t59" class="sg" style="width:61.20px;letter-spacing:-0.257px;">(330.18 ms)</span></div>
<div class="abs dot" style="left:1352px;top:489px;width:10px;height:10px;"></div>
<div class="abs it" style="left:1370.7px;top:484px"><span id="t60" class="sg" style="width:48.20px;letter-spacing:-0.430px;">[11:51:47]</span><span id="t61" class="sg" style="width:75.40px;letter-spacing:-0.318px;color:#132039;-webkit-text-stroke:.25px"><i class="cj">获取</i> SQL <i class="cj">类型</i></span><span id="t62" class="sg" style="width:39.90px;letter-spacing:-0.516px;">(141 us)</span></div>
<div class="abs dot" style="left:1352px;top:519px;width:10px;height:10px;"></div>
<div class="abs it" style="left:1370.7px;top:514px"><span id="t63" class="sg" style="width:48.20px;letter-spacing:-0.430px;">[11:51:47]</span><span id="t64" class="sg" style="width:82.80px;letter-spacing:-0.174px;color:#132039;-webkit-text-stroke:.25px"><i class="cj">获取可编辑信息</i></span><span id="t65" class="sg" style="width:30.60px;letter-spacing:-0.015px;">(5 us)</span></div>
<div class="abs dot" style="left:1352px;top:549px;width:10px;height:10px;"></div>
<div class="abs it" style="left:1370.7px;top:544px"><span id="t66" class="sg" style="width:48.20px;letter-spacing:-0.430px;">[11:51:47]</span><span id="t67" class="sg" style="width:59.40px;letter-spacing:-0.123px;color:#132039;-webkit-text-stroke:.25px"><i class="cj">获取列信息</i></span><span id="t68" class="sg" style="width:61.90px;letter-spacing:-0.194px;">(546.14 ms)</span></div>
<div class="abs dot" style="left:1352px;top:579px;width:10px;height:10px;"></div>
<div class="abs it" style="left:1370.7px;top:574px"><span id="t69" class="sg" style="width:48.20px;letter-spacing:-0.430px;">[11:51:47]</span><span id="t70" class="sg" style="width:71.40px;letter-spacing:-0.103px;color:#132039;-webkit-text-stroke:.25px"><i class="cj">获取告警内容</i></span><span id="t71" class="sg" style="width:27.80px;letter-spacing:-0.481px;">(1 us)</span></div>
<div class="abs dot" style="left:1352px;top:609px;width:10px;height:10px;"></div>
<div class="abs it" style="left:1370.7px;top:604px"><span id="t72" class="sg" style="width:48.20px;letter-spacing:-0.430px;">[11:51:47]</span><span id="t73" class="sg" style="width:72.10px;letter-spacing:-0.353px;color:#132039;-webkit-text-stroke:.25px">SQL <i class="cj">后置检查</i></span><span id="t74" class="sg" style="width:28.30px;letter-spacing:-0.398px;">(1 us)</span></div>
<div class="abs dot" style="left:1352px;top:639px;width:10px;height:10px;"></div>
<div class="abs it" style="left:1370.2px;top:634px"><span id="t75" class="sg" style="width:24.00px;letter-spacing:-0.008px;color:#132039;-webkit-text-stroke:0">完成</span><span id="t76" class="sg" style="width:76.20px;letter-spacing:-0.319px;-webkit-text-stroke:.1px">(总耗时:1.39 s)</span></div>
<div class="abs sub" style="left:1370.7px;top:354px"><span id="t77" class="sg" style="width:47.50px;letter-spacing:-0.500px;">[11:51:46]</span><span id="t78" class="sg" style="width:70.80px;letter-spacing:0.063px;">Jdbc prepare</span><span id="t79" class="sg" style="width:39.60px;letter-spacing:-0.153px;">(53 ms)</span></div>
<div class="abs sub" style="left:1370.7px;top:374px"><span id="t80" class="sg" style="width:47.50px;letter-spacing:-0.500px;">[11:51:46]</span><span id="t81" class="sg" style="width:122.10px;letter-spacing:0.353px;">Network consumption</span><span id="t82" class="sg" style="width:56.00px;letter-spacing:-0.136px;">(83.37 ms)</span></div>
<div class="abs sub" style="left:1370.7px;top:394px"><span id="t83" class="sg" style="width:47.50px;letter-spacing:-0.500px;">[11:51:46]</span><span id="t84" class="sg" style="width:77.10px;letter-spacing:-0.020px;">OBServer wait</span><span id="t85" class="sg" style="width:43.20px;letter-spacing:-0.104px;">(272 us)</span></div>
<div class="abs sub" style="left:1370.7px;top:414px"><span id="t86" class="sg" style="width:47.50px;letter-spacing:-0.500px;">[11:51:46]</span><span id="t87" class="sg" style="width:124.00px;letter-spacing:-0.257px;">DB Server Execute SQL</span><span id="t88" class="sg" style="width:54.40px;letter-spacing:-0.296px;">(91.35 ms)</span></div>
<div class="abs sub" style="left:1370.7px;top:434px"><span id="t89" class="sg" style="width:47.50px;letter-spacing:-0.500px;">[11:51:46]</span><span id="t90" class="sg" style="width:99.90px;letter-spacing:0.176px;">Calculate duration</span><span id="t91" class="sg" style="width:58.90px;letter-spacing:-0.466px;">(101.29 ms)</span></div>
<div class="abs sub" style="left:1370.7px;top:454px"><span id="t92" class="sg" style="width:47.50px;letter-spacing:-0.500px;">[11:51:46]</span><span id="t93" class="sg" style="width:72.60px;letter-spacing:0.041px;">Get result-set</span><span id="t94" class="sg" style="width:43.30px;letter-spacing:-0.091px;">(227 us)</span></div>
<div class="abs red" style="left:1339.2px;top:324.2px;width:193.3px;height:34px;"></div>
</body>
</html>
